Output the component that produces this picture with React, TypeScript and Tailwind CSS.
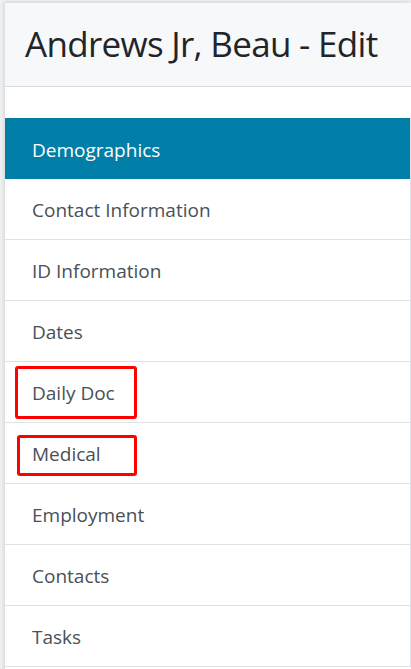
export default function App() {
  const items = [
    "Contact Information",
    "ID Information",
    "Dates",
    "Daily Doc",
    "Medical",
    "Employment",
    "Contacts",
    "Tasks",
  ];

  return (
    <div className="w-[411px] h-[669px] overflow-hidden bg-[#eef0f2] font-['Open_Sans',sans-serif]">
      <div className="ml-[5px] mt-[3px] bg-white shadow-[-1px_-1px_4px_rgba(0,0,0,0.12)] h-[700px]">
        {/* page header */}
        <div className="h-[84px] bg-[#f7f8fa] border-b border-[#d6d9dd] flex items-center pl-[20px]">
          <h1 className="text-[35px] text-[#212529] tracking-[-0.7px] leading-none pb-[2px]">
            Andrews Jr, Beau - Edit
          </h1>
        </div>

        <div className="h-[31px]" />

        {/* side nav */}
        <div className="border-r border-[#dee2e6]">
          <div className="h-[61px] bg-[#007ea7] flex items-center pl-[27px] pt-[3px] text-white text-[19px]">
            Demographics
          </div>
          {items.map((label) => (
            <div
              key={label}
              className="relative h-[61px] border-b border-[#dee2e6] flex items-center pl-[27px] pt-[3px] text-[#495057] text-[19px]"
            >
              {label}
              {label === "Daily Doc" && (
                <div className="absolute left-[10px] top-[4px] w-[122px] h-[53px] border-[3px] border-[#ff0000] rounded-[3px]" />
              )}
              {label === "Medical" && (
                <div className="absolute left-[12px] top-[12px] w-[120px] h-[41px] border-[3px] border-[#ff0000] rounded-[3px]" />
              )}
            </div>
          ))}
        </div>
      </div>
    </div>
  );
}
